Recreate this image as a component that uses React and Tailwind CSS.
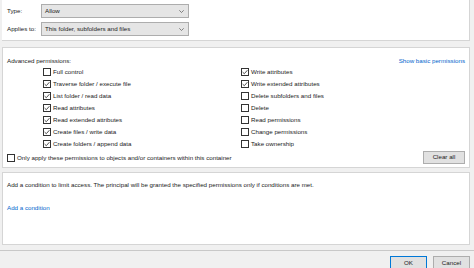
const LEFT = [
  ["Full control", false],
  ["Traverse folder / execute file", true],
  ["List folder / read data", true],
  ["Read attributes", true],
  ["Read extended attributes", true],
  ["Create files / write data", true],
  ["Create folders / append data", true],
];

const RIGHT = [
  ["Write attributes", true],
  ["Write extended attributes", true],
  ["Delete subfolders and files", false],
  ["Delete", false],
  ["Read permissions", false],
  ["Change permissions", false],
  ["Take ownership", false],
];

function Box({ checked }) {
  return (
    <span className="w-[8px] h-[8px] border border-[#333] bg-white flex items-center justify-center shrink-0">
      {checked && (
        <svg width="6" height="6" viewBox="0 0 6 6">
          <path d="M0.6 3.1 L2.3 4.7 L5.4 1.2" fill="none" stroke="#222" strokeWidth="0.8" />
        </svg>
      )}
    </span>
  );
}

function Check({ label, checked }) {
  return (
    <div className="h-[12px] flex items-center gap-[2px]">
      <Box checked={checked} />
      <span>{label}</span>
    </div>
  );
}

function Select({ value }) {
  return (
    <div className="w-[148px] h-[14px] bg-[#e5e5e5] border border-[#adadad] flex items-center justify-between pl-[3px] pr-[4px]">
      <span>{value}</span>
      <svg width="5" height="3" viewBox="0 0 5 3">
        <path d="M0.3 0.3 L2.5 2.5 L4.7 0.3" fill="none" stroke="#555" strokeWidth="0.7" />
      </svg>
    </div>
  );
}

export default function App() {
  return (
    <div className="w-[474px] h-[268px] overflow-hidden bg-[#f0f0f0] text-[6.2px] leading-none text-[#1a1a1a]" style={{ fontFamily: '"Liberation Sans", Arial, sans-serif' }}>
      {/* Type / applies to */}
      <div className="ml-[2px] w-[468px] h-[41px] bg-white border-r border-b border-[#d5d5d5] pt-[4px] flex flex-col gap-[4px]">
        <div className="flex items-center">
          <span className="w-[39px] pl-[5px]">Type:</span>
          <Select value="Allow" />
        </div>
        <div className="flex items-center">
          <span className="w-[39px] pl-[5px]">Applies to:</span>
          <Select value="This folder, subfolders and files" />
        </div>
      </div>

      {/* Advanced permissions */}
      <div className="mt-[6px] ml-[2px] w-[468px] h-[121px] bg-white border border-[#d5d5d5] pt-[8px] pl-[4px] pr-[4px]">
        <div className="h-[10px] flex items-center justify-between">
          <span>Advanced permissions:</span>
          <span className="text-[#0066cc]">Show basic permissions</span>
        </div>
        <div className="flex pl-[36px]">
          <div className="w-[198px]">
            {LEFT.map(([l, c]) => <Check key={l} label={l} checked={c} />)}
          </div>
          <div>
            {RIGHT.map(([l, c]) => <Check key={l} label={l} checked={c} />)}
          </div>
        </div>
        <div className="h-[14px] flex items-center justify-between">
          <div className="flex items-center gap-[2px] pt-[2px]">
            <Box checked={false} />
            <span>Only apply these permissions to objects and/or containers within this container</span>
          </div>
          <div className="w-[42px] h-[13px] bg-[#e1e1e1] border border-[#adadad] flex items-center justify-center">Clear all</div>
        </div>
      </div>

      {/* Conditions */}
      <div className="mt-[4px] ml-[2px] w-[468px] h-[73px] bg-white border border-[#d5d5d5] pl-[4px] pt-[9px]">
        <div className="h-[6px] flex items-center">Add a condition to limit access. The principal will be granted the specified permissions only if conditions are met.</div>
        <div className="mt-[17px] h-[6px] flex items-center text-[#0066cc]">Add a condition</div>
      </div>

      {/* Footer */}
      <div className="mt-[5px] border-t border-[#c8c8c8] h-[20px] flex justify-end items-start gap-[6px] pt-[5px] pr-[4px]">
        <div className="w-[37px] h-[14px] bg-[#e1e1e1] border border-[#0078d7] flex items-center justify-center">OK</div>
        <div className="w-[37px] h-[14px] bg-[#e1e1e1] border border-[#adadad] flex items-center justify-center">Cancel</div>
      </div>
    </div>
  );
}
